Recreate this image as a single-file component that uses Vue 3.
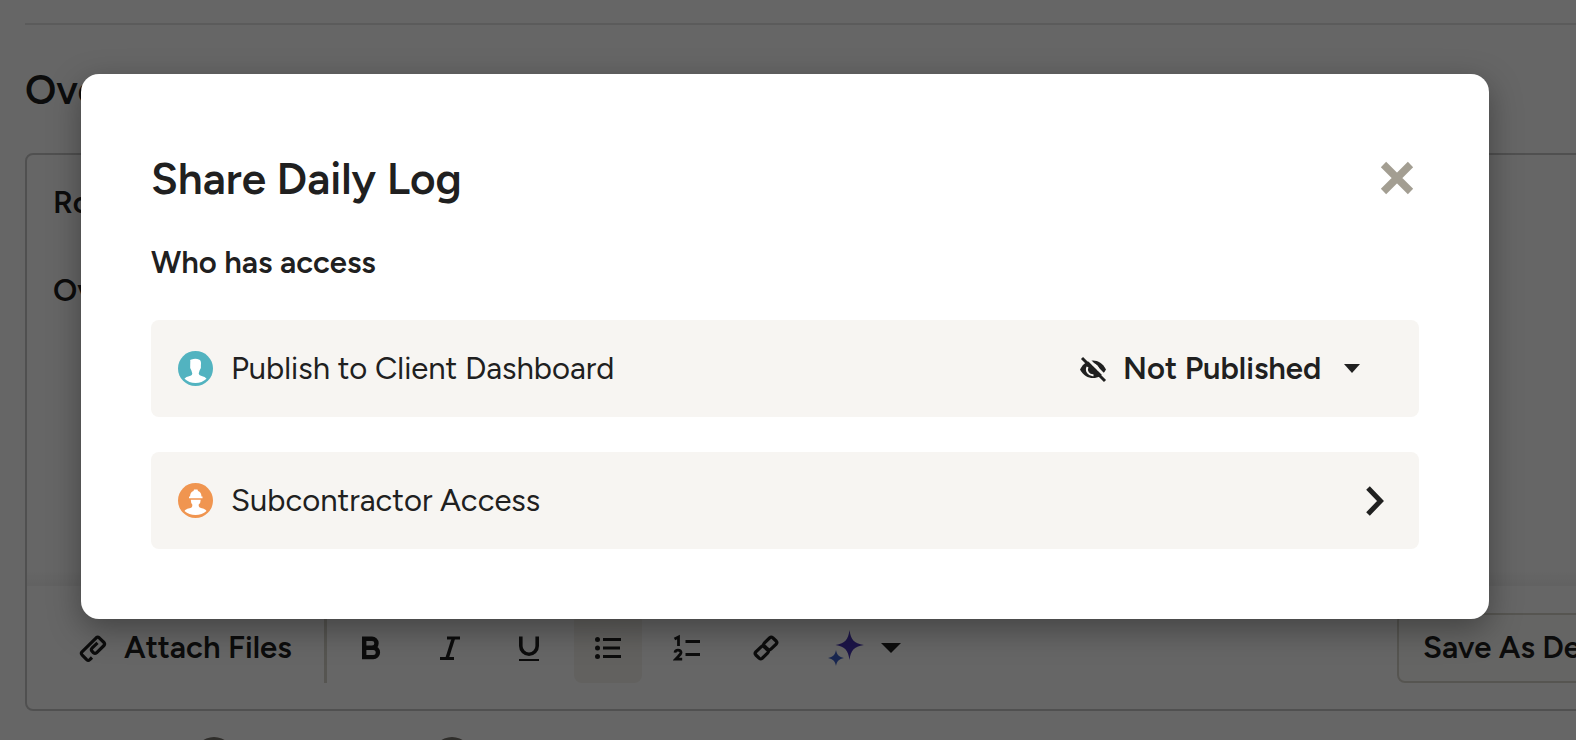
<script setup>
import { ref } from 'vue'

const open = ref(true)
const visibility = ref('Not Published')
</script>

<template>
  <div class="screen">
    <main class="page">
      <hr class="rule" />
      <h1 class="page-title">Ove</h1>
      <section class="editor">
        <div class="content">
          <p>Ro</p>
          <p>Ov</p>
        </div>
        <div class="toolbar">
          <button class="attach" type="button">
            <svg width="30" height="30" viewBox="0 0 30 30" fill="none" stroke="currentColor" stroke-width="3.200" stroke-linejoin="round" aria-hidden="true">
              <path d="M14 24.500 11.800 26.600Q10.200 28 8.700 26.600L4 21.800Q2.700 20.300 4 18.800L18.200 4.800Q19.700 3.500 21.200 4.800L26 9.500Q27.200 11 26 12.500L18.500 19.800Q17 21 15.500 19.800L14 18.200Q12.700 16.700 14 15.200L19.500 9.800" />
            </svg>
            <span>Attach Files</span>
          </button>
          <div class="tools">
            <button class="tool" type="button" aria-label="Bold">
              <svg width="28" height="28" viewBox="0 0 28 28" fill="none" stroke="currentColor" stroke-width="4.400" aria-hidden="true">
                <path d="M7.200 4.700V23.300M5 4.700h10a4.400 4.400 0 0 1 0 9H7M15 13.700h1.200a4.700 4.700 0 0 1 0 9.400H5" />
              </svg>
            </button>
            <button class="tool" type="button" aria-label="Italic">
              <svg width="28" height="28" viewBox="0 0 28 28" fill="none" stroke="currentColor" stroke-width="3" aria-hidden="true">
                <path d="M11 4h13M4 24.500h14" /><path d="M17.500 4 11 24.500" stroke-width="3.500" />
              </svg>
            </button>
            <button class="tool" type="button" aria-label="Underline">
              <svg width="28" height="28" viewBox="0 0 28 28" fill="none" stroke="currentColor" stroke-width="3.600" aria-hidden="true">
                <path d="M5.800 2.500v9.500a8.200 8.200 0 0 0 16.400 0V2.500" /><path d="M4 26h20" stroke-width="2" />
              </svg>
            </button>
            <button class="tool active" type="button" aria-label="Bulleted list" aria-pressed="true">
              <svg width="28" height="28" viewBox="0 0 28 28" aria-hidden="true" fill="currentColor">
                <circle cx="3.500" cy="5.500" r="2.500" /><circle cx="3.500" cy="14" r="2.500" /><circle cx="3.500" cy="22.500" r="2.500" />
                <path d="M9 4h18v3H9zM9 12.500h17v3H9zM9 21h18v3H9z" />
              </svg>
            </button>
            <button class="tool" type="button" aria-label="Numbered list">
              <svg width="28" height="28" viewBox="0 0 28 28" fill="none" stroke="currentColor" stroke-width="2.800" aria-hidden="true">
                <path d="M12.500 7.500H27M12.500 20.500H27" stroke-width="3" />
                <path d="M1.500 5 5.500 3V12" /><path d="M2 18.600Q2.300 16.200 5 16.200 8.200 16.200 8 18.800 7.800 20.300 5.500 22.200L2.600 25.200H9.200" />
              </svg>
            </button>
            <button class="tool" type="button" aria-label="Insert link">
              <svg width="28" height="28" viewBox="0 0 24 24" fill="none" stroke="currentColor" stroke-width="2.800" aria-hidden="true">
                <path d="M10 10.500 12 12.700Q14.300 14.800 16.200 13L20.700 8.700Q21.900 7.300 20.700 6L17.800 3.200Q16.500 2.200 15.200 3.200L10.700 7.600Q9.300 9 10.500 11" />
                <path d="M14 13.500 12 11.300Q9.700 9.200 7.800 11L3.300 15.300Q2.100 16.700 3.300 18L6.200 20.800Q7.500 21.800 8.800 20.800L13.300 16.400Q14.700 15 13.500 13" />
                <path d="M15.500 8 13 10.500M8.500 16 11 13.500" stroke="#fff" stroke-width="1" />
              </svg>
            </button>
          </div>
          <button class="ai" type="button" aria-label="Writing assistant">
            <svg width="36" height="36" viewBox="0 0 36 36" aria-hidden="true">
              <path fill="#4836b3" d="M21.500 0C23 10 25.500 13 36 15 25.500 17 23 20 21.500 30 20 20 17.500 17 7.500 15 17.500 13 20 10 21.500 0Z" />
              <path fill="#3f63c8" d="M8 20C9 25 11 27 16 28 11 29 9 31 8 36 7 31 5 29 0 28 5 27 7 25 8 20Z" />
            </svg>
            <svg width="22" height="12" viewBox="0 0 22 12" aria-hidden="true"><path fill="currentColor" d="M1 1h20L11 11Z" /></svg>
          </button>
          <button class="save" type="button">Save As De</button>
        </div>
      </section>
      <div class="people" aria-hidden="true"><i></i><i></i></div>
    </main>

    <div v-if="open" class="overlay">
      <div class="modal" role="dialog" aria-modal="true" aria-labelledby="share-title">
        <header class="modal-head">
          <h2 id="share-title">Share Daily Log</h2>
          <button class="close" type="button" aria-label="Close" @click="open = false">
            <svg width="34" height="34" viewBox="0 0 34 34" aria-hidden="true"><path d="M3.500 3.500 30.500 30.500M30.500 3.500 3.500 30.500" stroke="#a39e92" stroke-width="7.500" /></svg>
          </button>
        </header>
        <h3>Who has access</h3>
        <div class="rows">
          <div class="row">
            <svg class="avatar" viewBox="0 0 35 35" aria-hidden="true">
              <circle cx="17.500" cy="17.500" r="17.500" fill="#52b3c0" />
              <path fill="#fff" d="M12.300 10.200Q11.500 8.500 13.500 8.600 17.500 7 21.500 8.800 23.500 10 22.900 14.200 23.500 17.500 21.600 19.500L20.700 22.500Q21 24.200 23 24.800 27.500 26 28.500 27.800 24 32 17.500 32 11 32 6.500 27.800 7.500 26 12.500 24.800 14.200 24.200 14.300 22.500L13.400 19.500Q11.600 17.500 12.200 14.200Z" />
            </svg>
            <label for="client-visibility">Publish to Client Dashboard</label>
            <div class="picker">
              <svg width="28" height="28" viewBox="0 0 28 28" aria-hidden="true">
                <path fill="currentColor" d="M1 14.500C4 8.500 9 5.500 14 5.500S24 8.500 27 14.500C24 20.500 19 23 14 23S4 20.500 1 14.500Z" />
                <path fill="none" stroke="#f7f5f2" stroke-width="2" d="M8.500 11.800A6 6 0 0 0 14.500 20.300M13.500 9.300A6 6 0 0 1 19.500 15.500" />
                <path stroke="#f7f5f2" stroke-width="3" d="M6 1 29.500 24.500" />
                <path stroke="currentColor" stroke-width="3" d="M3 3 26 26" />
              </svg>
              <select id="client-visibility" v-model="visibility">
                <option>Not Published</option>
              </select>
              <svg class="caret" width="16" height="9" viewBox="0 0 16 9" aria-hidden="true"><path fill="currentColor" d="M0 0h16L8 9Z" /></svg>
            </div>
          </div>
          <button class="row" type="button">
            <svg class="avatar" viewBox="0 0 35 35" aria-hidden="true">
              <circle cx="17.500" cy="17.500" r="17.500" fill="#f09550" />
              <path fill="#fff" d="M11 13.500H24.500V15.300H11ZM12 14Q12 9 15.500 8L16 6.500H19.500L20 8Q23.500 9 23.500 14ZM12.800 16.800H22.700Q22.700 20 20.700 21.500V23Q21 24.500 23 25 27.500 26 28.500 28 24 32 17.500 32 11 32 6.500 28 7.500 26 12.500 25 14.200 24.500 14.300 23V21.500Q12.800 20 12.800 16.800Z" />
            </svg>
            <span>Subcontractor Access</span>
            <svg class="chevron" width="20" height="30" viewBox="0 0 20 30" fill="none" stroke="currentColor" stroke-width="5" aria-hidden="true"><path d="M3 2 15.500 15 3 28" /></svg>
          </button>
        </div>
      </div>
    </div>
  </div>
</template>

<style>
body {
  margin: 0;
}
</style>

<style scoped>
.screen {
  position: relative;
  height: 100vh;
  overflow: hidden;
  background: #fff;
  color: #202020;
  font-family: Figtree, Lato, sans-serif;
  font-size: 31px;
  line-height: 40px;
}

* {
  box-sizing: border-box;
}

svg {
  display: block;
  flex: none;
}

button,
select {
  padding: 0;
  border: 0;
  background: none;
  color: inherit;
  font: inherit;
  white-space: nowrap;
}

.page {
  padding: 23px 0 0 25px;
}

.rule {
  height: 2px;
  margin: 0;
  border: 0;
  background: #e3e3e3;
}

.page-title {
  margin: 41px 0 39px;
  font-size: 40px;
  line-height: 48px;
  font-weight: 600;
}

.editor {
  margin-right: -84px;
  border: 2px solid #c8c8c8;
  border-radius: 8px;
}

.content {
  display: flex;
  flex-direction: column;
  gap: 48px;
  height: 431px;
  padding: 28px 26px;
  background: linear-gradient(transparent 415px, #f4f4f4);
  font-weight: 600;
}

.content p {
  margin: 0;
}

.toolbar {
  display: flex;
  align-items: center;
  height: 123px;
  padding: 0 21px 0 51px;
  font-weight: 600;
}

.attach {
  display: flex;
  align-items: center;
  gap: 16px;
  height: 70px;
  padding-right: 32px;
  border-right: 3px solid #d8d4cb;
}

.tools {
  display: flex;
  gap: 11px;
  margin-left: 10px;
}

.tool {
  display: grid;
  place-items: center;
  width: 68px;
  height: 70px;
  border-radius: 8px;
}

.tool.active {
  background: #f5f2ed;
}

.ai {
  display: flex;
  align-items: center;
  gap: 16px;
  margin-left: 28px;
}

.save {
  width: 240px;
  height: 70px;
  margin-left: auto;
  padding-left: 24px;
  border: 2px solid #d8d4cb;
  border-radius: 8px;
  background: #fdfcfa;
  text-align: left;
}

.people {
  display: flex;
  gap: 198px;
  margin: 26px 0 0 169px;
}

.people i {
  width: 40px;
  height: 40px;
  border-radius: 50%;
  background: #77736b;
}

.overlay {
  position: absolute;
  inset: 0;
  padding: 74px 87px 0 81px;
  background: rgba(0, 0, 0, 0.6);
}

.modal {
  padding: 70px;
  border-radius: 18px;
  background: #fff;
  box-shadow: 0 10px 32px rgba(0, 0, 0, 0.35);
}

.modal-head {
  display: flex;
  align-items: center;
  justify-content: space-between;
  height: 68px;
  padding-right: 5px;
}

h2 {
  margin: 0;
  padding-top: 2px;
  font-size: 44px;
  line-height: 56px;
  font-weight: 600;
}

h3 {
  margin: 31px 0 37px;
  font-size: 31px;
  line-height: 40px;
  font-weight: 600;
}

.rows {
  display: grid;
  gap: 35px;
}

.row {
  display: flex;
  align-items: center;
  gap: 18px;
  width: 100%;
  height: 97px;
  padding: 0 34px 0 27px;
  border-radius: 8px;
  background: #f7f5f2;
}

.avatar {
  width: 35px;
  height: 35px;
}

.picker {
  display: flex;
  align-items: center;
  gap: 16px;
  margin-left: auto;
  padding-right: 25px;
}

.picker select {
  appearance: none;
  font-weight: 600;
}

.caret {
  margin-left: 6px;
}

.chevron {
  margin-left: auto;
}
</style>
